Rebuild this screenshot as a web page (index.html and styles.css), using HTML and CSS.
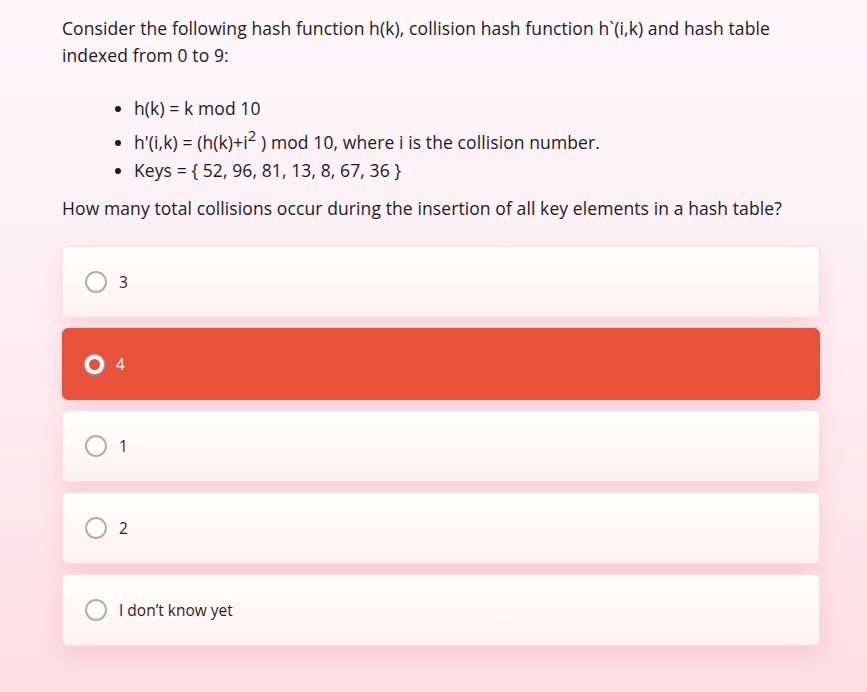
FILE: index.html
```html
<!DOCTYPE html>
<html lang="en">
<head>
    <meta charset="UTF-8">
    <meta name="viewport" content="width=device-width, initial-scale=1.0">
    <title>Hash Collisions Quiz</title>
    <link rel="stylesheet" href="styles.css">
</head>
<body>
    <div class="quiz">
        <div class="question">
            <p class="intro">Consider the following hash function h(k), collision hash function h`(i,k) and hash table indexed from 0 to 9:</p>
            <ul class="facts">
                <li>h(k) = k mod 10</li>
                <li class="tall">h'(i,k) = (h(k)+i<sup>2</sup> ) mod 10, where i is the collision number.</li>
                <li>Keys = { 52, 96, 81, 13, 8, 67, 36 }</li>
            </ul>
            <p class="ask">How many total collisions occur during the insertion of all key elements in a hash table?</p>
        </div>

        <div class="options">
            <label class="option">
                <span class="radio"></span>
                <span class="option-text">3</span>
            </label>
            <label class="option selected">
                <span class="radio"></span>
                <span class="option-text">4</span>
            </label>
            <label class="option">
                <span class="radio"></span>
                <span class="option-text">1</span>
            </label>
            <label class="option">
                <span class="radio"></span>
                <span class="option-text">2</span>
            </label>
            <label class="option">
                <span class="radio"></span>
                <span class="option-text">I don’t know yet</span>
            </label>
        </div>
    </div>
</body>
</html>
```

FILE: styles.css
```css
:root {
    --text-color: #1c1a1f;
    --option-text: #3a1614;
    --accent: #e8523b;
    --radio-border: #b3aca3;
}

html, body {
    height: 100%;
}

body {
    margin: 0;
    font-family: "Open Sans", Lato, Arial, sans-serif;
    color: var(--text-color);
    background: linear-gradient(180deg, #fdf7fa 0%, #fdeff4 45%, #fddde6 100%);
}

.quiz {
    width: 758px;
    padding: 15px 0 0 62px;
}

.question {
    font-size: 17.5px;
    letter-spacing: 0.1px;
    line-height: 27px;
}

.question p {
    margin: 0;
}

.facts {
    margin: 25px 0 0;
    padding-left: 72px;
    line-height: 28px;
}

.facts li.tall {
    line-height: 28px;
    padding-top: 6px;
}

.facts sup {
    font-size: 15px;
    line-height: 0;
    vertical-align: 8px;
}

.ask {
    padding-top: 11px;
}

.options {
    display: flex;
    flex-direction: column;
    gap: 10px;
    margin-top: 24px;
}

.option {
    display: flex;
    align-items: center;
    gap: 12px;
    height: 72px;
    box-sizing: border-box;
    padding-left: 22px;
    border: 1px solid #f0e2e2;
    border-radius: 6px;
    background: linear-gradient(180deg, #ffffff 0%, #fff2ef 100%);
    box-shadow: 0 8px 22px rgba(245, 150, 172, 0.32);
    cursor: pointer;
}

.radio {
    width: 18px;
    height: 18px;
    border: 2px solid var(--radio-border);
    border-radius: 50%;
    background: #fff;
    flex-shrink: 0;
}

.option-text {
    font-size: 15.5px;
    font-weight: 500;
    color: var(--option-text);
}

.option.selected {
    background: var(--accent);
    border-color: var(--accent);
}

.option.selected .radio {
    width: 11px;
    height: 11px;
    border: 4px solid #fff;
    background: var(--accent);
    box-shadow: 0 0 0 1.5px #a8958f;
}

.option.selected .option-text {
    color: #fff;
}
```
